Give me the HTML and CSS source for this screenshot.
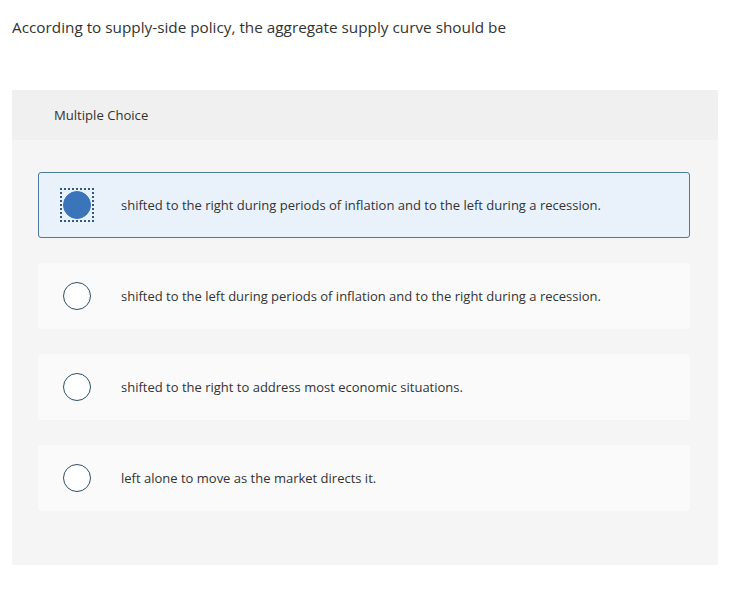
FILE: index.html
```html
<!DOCTYPE html>
<html>
<head>
<meta charset="utf-8">
<link rel="stylesheet" href="styles.css">
</head>
<body>
<p class="question">According to supply-side policy, the aggregate supply curve should be</p>
<div class="panel">
  <div class="panel-head">Multiple Choice</div>
  <div class="panel-body">
    <div class="option selected">
      <span class="focus"><span class="radio"></span></span>
      <span class="label">shifted to the right during periods of inflation and to the left during a recession.</span>
    </div>
    <div class="option">
      <span class="focus"><span class="radio"></span></span>
      <span class="label">shifted to the left during periods of inflation and to the right during a recession.</span>
    </div>
    <div class="option">
      <span class="focus"><span class="radio"></span></span>
      <span class="label">shifted to the right to address most economic situations.</span>
    </div>
    <div class="option">
      <span class="focus"><span class="radio"></span></span>
      <span class="label">left alone to move as the market directs it.</span>
    </div>
  </div>
</div>
</body>
</html>
```
FILE: styles.css
```css
html, body {
  margin: 0;
  padding: 0;
  background: #ffffff;
}
body {
  font-family: "Open Sans", Lato, sans-serif;
  color: #333333;
  padding: 0 16px 0 12px;
}
.question {
  margin: 0;
  padding-top: 17px;
  height: 90px;
  box-sizing: border-box;
  font-size: 15.3px;
  line-height: 20px;
  color: #333;
}
.panel {
  background: #f5f5f5;
  box-shadow: 0 1px 1px rgba(0,0,0,0.04);
}
.panel-head {
  height: 50px;
  background: #f0f0f0;
  display: flex;
  align-items: center;
  padding-left: 42px;
  font-size: 13.1px;
  color: #333;
}
.panel-body {
  padding: 32px 28px 54px 26px;
  display: flex;
  flex-direction: column;
  gap: 25px;
}
.option {
  height: 66px;
  box-sizing: border-box;
  background: #fafafa;
  border: 1px solid #fafafa;
  border-radius: 3px;
  display: flex;
  align-items: center;
  padding-left: 21px;
}
.option.selected {
  background: #e9f2fb;
  border-color: #4d7a99;
}
.focus {
  width: 34px;
  height: 34px;
  box-sizing: border-box;
  border: 2px dotted transparent;
  display: flex;
  align-items: center;
  justify-content: center;
  flex: none;
}
.selected .focus {
  border-color: #2f5a86;
}
.radio {
  width: 28px;
  height: 28px;
  box-sizing: border-box;
  border-radius: 50%;
  border: 1.5px solid #2d4f64;
  background: #ffffff;
}
.selected .radio {
  background: #3a75bb;
  border-color: #3a75bb;
}
.label {
  margin-left: 27px;
  font-size: 13px;
  color: #333;
}
```
